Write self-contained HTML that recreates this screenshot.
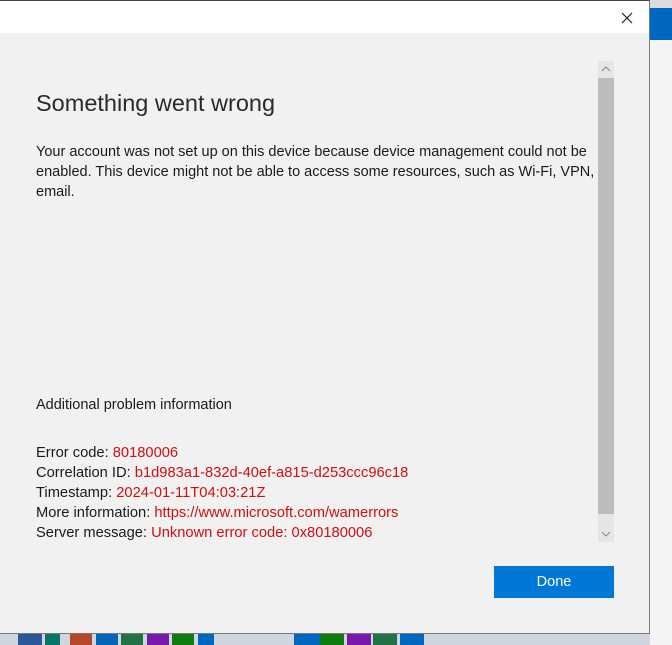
<!DOCTYPE html>
<html><head><style>
body{margin:0;width:672px;height:645px;overflow:hidden;background:#f3f3f3;font-family:"Liberation Sans",sans-serif;position:relative}
.bg{position:absolute;left:650px;top:0;width:22px;height:645px;background:#f4f4f4}
.bgtop{position:absolute;left:650px;top:0;width:22px;height:8px;background:#dcdcdc}
.bgblue{position:absolute;left:650px;top:8px;width:22px;height:32px;background:#0067c0}
.dlg{position:absolute;left:0;top:0;width:649px;height:632px;background:#f1f1f1;border-right:1px solid #7a7a7a;border-bottom:1px solid #7a7a7a;border-top:1px solid #444;box-sizing:content-box;overflow:hidden}
.title{position:absolute;left:0;top:0;width:649px;height:32px;background:#fff}
.x{position:absolute;left:620px;top:10px;width:14px;height:14px}
.content{position:absolute;left:36px;top:0;width:562px;height:632px;overflow:hidden;color:#1a1a1a}
h1{position:absolute;top:89px;left:0;margin:0;font-weight:300;font-size:23.5px;white-space:nowrap;color:#2a2a2a}
.p{position:absolute;top:141px;left:0;font-size:14.5px;line-height:20px;white-space:nowrap}
.add{position:absolute;top:396px;font-size:14.5px;white-space:nowrap}
.err{position:absolute;top:442px;font-size:14.7px;line-height:20px;white-space:nowrap}
.r{color:#d00f0f}
.sb{position:absolute;left:598px;top:60px;width:16px;height:481px;background:#e6e6e6}
.thumb{position:absolute;left:598px;top:77px;width:16px;height:436px;background:#bcbcbc}
.btn{position:absolute;left:494px;top:565px;width:120px;height:32px;background:#0078d7;color:#fff;font-size:14.5px;text-align:center;line-height:32px}
.tb{position:absolute;top:633px;height:12px}
</style></head><body>
<div class="bg"></div><div class="bgtop"></div><div class="bgblue"></div>
<div class="tb" style="left:0;width:650px;background:#cfd6de"></div>
<div class="tb" style="left:18px;width:24px;background:#2b579a"></div>
<div class="tb" style="left:45px;width:15px;background:#077568"></div>
<div class="tb" style="left:70px;width:22px;background:#b7472a"></div>
<div class="tb" style="left:96px;width:22px;background:#0364b8"></div>
<div class="tb" style="left:121px;width:22px;background:#217346"></div>
<div class="tb" style="left:147px;width:22px;background:#7719aa"></div>
<div class="tb" style="left:172px;width:22px;background:#107c10"></div>
<div class="tb" style="left:198px;width:16px;background:#0067c0"></div>
<div class="tb" style="left:294px;width:40px;background:#0067c0"></div>
<div class="tb" style="left:320px;width:24px;background:#107c10"></div>
<div class="tb" style="left:347px;width:24px;background:#7719aa"></div>
<div class="tb" style="left:373px;width:24px;background:#217346"></div>
<div class="tb" style="left:400px;width:24px;background:#0067c0"></div>
<div class="dlg">
<div class="title"></div>
<svg class="x" viewBox="0 0 14 14"><path d="M2 2L12 12M12 2L2 12" stroke="#222" stroke-width="1.2"/></svg>
<div class="content">
<h1>Something went wrong</h1>
<div class="p">Your account was not set up on this device because device management could not be<br>enabled. This device might not be able to access some resources, such as Wi-Fi, VPN, or<br>email.</div>
<div class="add">Additional problem information</div>
<div class="err">Error code: <span class="r">80180006</span><br>Correlation ID: <span class="r">b1d983a1-832d-40ef-a815-d253ccc96c18</span><br>Timestamp: <span class="r">2024-01-11T04:03:21Z</span><br>More information: <span class="r">https://www.microsoft.com/wamerrors</span><br>Server message: <span class="r">Unknown error code: 0x80180006</span></div>
</div>
<div class="sb"></div><div class="thumb"></div>
<svg style="position:absolute;left:601px;top:64px" width="10" height="8"><path d="M1 6L5 2L9 6" stroke="#888" fill="none"/></svg>
<svg style="position:absolute;left:601px;top:529px" width="10" height="8"><path d="M1 2L5 6L9 2" stroke="#888" fill="none"/></svg>
<div class="btn">Done</div>
</div>
</body></html>
